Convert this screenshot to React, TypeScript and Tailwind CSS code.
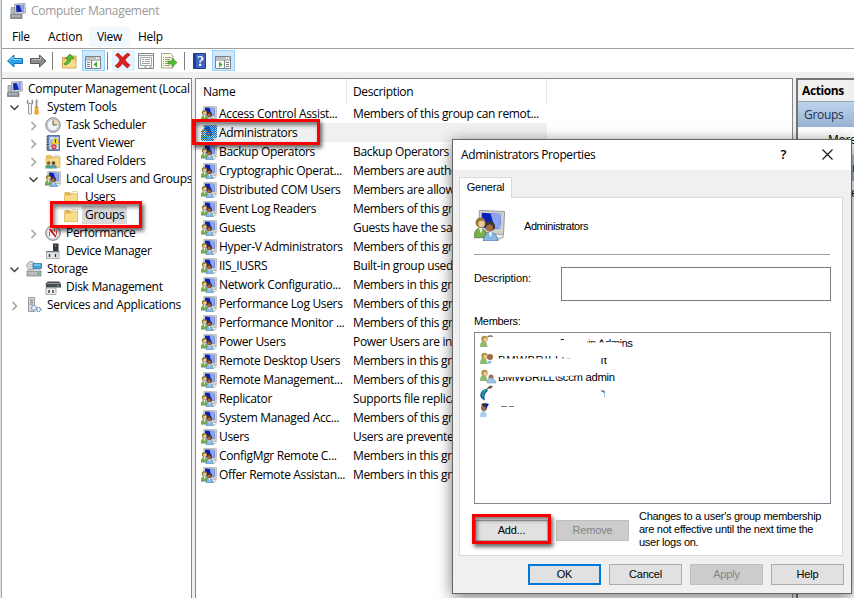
import type { ReactNode } from "react";

const groups = [
    { name: "Access Control Assist...", desc: "Members of this group can remot..." },
    { name: "Administrators", desc: "", selected: true },
    { name: "Backup Operators", desc: "Backup Operators can override se..." },
    { name: "Cryptographic Operat...", desc: "Members are authorized to perfor..." },
    { name: "Distributed COM Users", desc: "Members are allowed to launch, a..." },
    { name: "Event Log Readers", desc: "Members of this group can read e..." },
    { name: "Guests", desc: "Guests have the same access as m..." },
    { name: "Hyper-V Administrators", desc: "Members of this group have com..." },
    { name: "IIS_IUSRS", desc: "Built-in group used by Internet Inf..." },
    { name: "Network Configuratio...", desc: "Members in this group can have s..." },
    { name: "Performance Log Users", desc: "Members of this group may sche..." },
    { name: "Performance Monitor ...", desc: "Members of this group can acces..." },
    { name: "Power Users", desc: "Power Users are included for back..." },
    { name: "Remote Desktop Users", desc: "Members in this group are grante..." },
    { name: "Remote Management...", desc: "Members of this group can acces..." },
    { name: "Replicator", desc: "Supports file replication in a dom..." },
    { name: "System Managed Acc...", desc: "Members of this group are mana..." },
    { name: "Users", desc: "Users are prevented from making ..." },
    { name: "ConfigMgr Remote C...", desc: "Members in this group can view a..." },
    { name: "Offer Remote Assistan...", desc: "Members in this group can offer r..." },
];

function Svg({ size = 16, children }: { size?: number; children: ReactNode }) {
    return (
        <svg width={size} height={size} viewBox="0 0 16 16" className="shrink-0">
            {children}
        </svg>
    )
}

function ComputerIcon() {
    return (
        <Svg>
            <path d="M4.500 1 L15 .5 L15.500 10 L5 11Z" fill="#d5d7d4" stroke="#8a8f94" strokeWidth=".7" />
            <path d="M6 2.200 L13.800 1.800 L14 8.500 L6.400 9.200Z" fill="#1426b0" />
            <path d="M9.500 2 L13.800 1.800 L14 8.500 L12 8.700Z" fill="#8ea4f0" />
            <path d="M1 4.500h3.500v6H1z" fill="#b6bbc1" stroke="#7b8188" strokeWidth=".6" />
            <path d="M.5 11.500h11.500v4H.5z" fill="#8b9298" stroke="#5d646b" strokeWidth=".6" />
            <path d="M2 13h2M5 13h2M8 13h2" stroke="#e8ebee" />
        </Svg>
    )
}

// every other pixel of the icon is tinted while its row is selected
const tint = Array.from({ length: 128 }, (_, i) => {
    const y = Math.floor(i / 8)
    return { x: (i % 8) * 2 + (y % 2), y }
}).filter(({ x, y }) => (y < 13 || x < 13) && (x > 2 || y > 5))

function GroupIcon({ size = 16, selected = false }: { size?: number; selected?: boolean }) {
    return (
        <Svg size={size}>
            <path d="M2.800 .2 L15.800 .8 L15.200 13 L2.600 11Z" fill="#cfd1cd" stroke="#989a95" strokeWidth=".5" />
            <path d="M4 1.400 L14 2 L13.400 9.800 L4 9Z" fill="#0a20b8" />
            <path d="M8.500 1.700 L14 2 L13.400 9.800 L10.800 9.600Z" fill="#8ba5f2" />
            <path d="M12 14.500 L15.500 13.300 L15.500 14.300 L12.500 15.800Z" fill="#c6c6c6" />
            <path d="M0 14.300 Q0 9.600 3.300 9.200 Q6.300 9.600 6.700 14.300Z" fill="#79ad4e" stroke="#4c7c2e" strokeWidth=".4" />
            <path d="M2.500 9.300 h2 l-.8 3z" fill="#eef4dc" />
            <circle cx="3.400" cy="6.500" r="2.600" fill="#957a35" />
            <circle cx="3.900" cy="7.200" r="1.700" fill="#ecc898" />
            <path d="M4.900 16 Q4.900 12 8.500 11.500 Q12.100 12 12.300 16Z" fill="#8ab8e4" stroke="#3f71a3" strokeWidth=".4" />
            <path d="M7.500 11.500 h2 l-1 2.500z" fill="#edf3fa" />
            <circle cx="8.300" cy="8.400" r="2.600" fill="#40352e" />
            <circle cx="8" cy="9.300" r="1.800" fill="#a46a40" />
            {selected && tint.map(({ x, y }) => (
                <rect key={`${x}-${y}`} x={x} y={y} width="1" height="1" fill="#0078d7" />
            ))}
        </Svg>
    )
}

function FolderIcon() {
    return (
        <Svg>
            <path d="M1.500 3h5l1 1.500h7v10h-13z" fill="#e3b750" />
            <path d="M9 2.500h5.500v4H9z" fill="#fff" stroke="#d9ae4a" strokeWidth=".5" />
            <path d="M1.500 6h6l1.200-1.300h5.800v10h-13z" fill="#f8dd8b" stroke="#d9ac48" strokeWidth=".6" />
        </Svg>
    )
}

function ToolsIcon() {
    return (
        <Svg>
            <path d="M1.800 .8 Q0 4 2.500 6v8.500q1.500 1.500 3 0V6Q8 4 6.200 .8V4H5L4 5 3 4H1.800z" fill="#f1f3f5" stroke="#747b82" strokeWidth=".8" />
            <path d="M10.500 .5v8" stroke="#8d949b" strokeWidth="1.800" />
            <path d="M8.800 8h3.400l-.5 2 .8 4.500q-1.800 1.800-3.800 0l.6-4.500z" fill="#f5b21c" stroke="#c98410" strokeWidth=".6" />
        </Svg>
    )
}

function ClockIcon() {
    return (
        <Svg>
            <circle cx="8" cy="8" r="7.300" fill="#c9ced4" stroke="#8b8f94" />
            <circle cx="8" cy="8" r="5.600" fill="#f5f7fa" stroke="#9fa6ad" strokeWidth=".5" />
            <path d="M8 2.500 A5.500 5.500 0 0 1 13.500 8 H8Z" fill="#f3dda5" />
            <path d="M8 3.500V8h4" stroke="#4f5860" fill="none" />
        </Svg>
    )
}

function EventIcon() {
    return (
        <Svg>
            <path d="M2.500 .5h12v15h-12z" fill="#6e94cd" stroke="#3d5f95" strokeWidth=".8" />
            <path d="M4.500 2h9v12h-9z" fill="#d5e2f4" />
            <path d="M1 2h3M1 4.500h3M1 7h3M1 9.500h3M1 12h3M1 14h3" stroke="#59616b" strokeWidth=".9" />
            <path d="M5 5h3M5 7h2M5 9h3M5 11h3" stroke="#6886b0" strokeWidth=".7" />
            <path d="M10.500 2l4 7h-8z" fill="#ffd93a" stroke="#b98d08" strokeWidth=".5" />
            <path d="M10.500 4.500v3" stroke="#222" />
            <circle cx="9" cy="11.800" r="2.600" fill="#d43d2f" />
            <path d="M8 10.800l2 2m0-2l-2 2" stroke="#fff" strokeWidth=".7" />
        </Svg>
    )
}

function SharedIcon() {
    return (
        <Svg>
            <path d="M1 2h5l1 1.500h8v10H1z" fill="#e6bf66" />
            <path d="M9 1.500h5.500v3H9z" fill="#dce8f2" />
            <path d="M1 5h6l1-1h7v10.500H1z" fill="#f6d985" stroke="#d5a63d" strokeWidth=".6" />
            <path d="M.3 15.500q0-4 3.200-4t3.200 4z" fill="#51a38a" />
            <path d="M5.500 15.500q0-4 3.200-4t3.200 4z" fill="#5e9ca5" />
            <circle cx="3.700" cy="10" r="1.800" fill="#8b5b3b" />
            <circle cx="8.500" cy="10" r="1.800" fill="#554337" />
        </Svg>
    )
}

function PerformanceIcon() {
    return (
        <Svg>
            <circle cx="8" cy="8" r="7.300" fill="#e4e6e8" stroke="#747a80" />
            <circle cx="8" cy="8" r="5.700" fill="#fff" stroke="#b4b8bc" strokeWidth=".5" />
            <path d="M4.500 11V6.500M11.500 10V5.500M7 4v3M9.500 4v3" stroke="#c44a4a" strokeWidth="1.100" />
            <path d="M4.500 4l6.500 8" stroke="#d01212" strokeWidth="1.700" />
        </Svg>
    )
}

function DeviceIcon() {
    return (
        <Svg>
            <path d="M8 .5h5.500v9H8z" fill="#34383c" />
            <path d="M10.500 2v1.500" stroke="#33d641" strokeWidth="1.300" />
            <path d="M1.500 9h12.500v6.500h-12.500z" fill="#e4e6e8" stroke="#8c9196" strokeWidth=".7" />
            <path d="M1 8.500h13.500" stroke="#767b80" />
            <path d="M4.500 11v3M10.500 11v3" stroke="#33383d" strokeWidth="1.400" />
        </Svg>
    )
}

function StorageIcon() {
    return (
        <Svg>
            <path d="M1 10h14v5H1z" fill="#b9bdc2" stroke="#6a7077" strokeWidth=".7" />
            <path d="M2 8.500h12l1 1.500H1z" fill="#e7e9eb" stroke="#8b9096" strokeWidth=".4" />
            <path d="M12.500 11.500v2" stroke="#24b637" strokeWidth="1.600" />
            <circle cx="5" cy="4.700" r="4.200" fill="#d9dde1" stroke="#7c838a" strokeWidth=".7" />
            <circle cx="5" cy="4.700" r="1.200" fill="#fff" stroke="#888" strokeWidth=".5" />
            <path d="M7 2.500h8.500v5H7z" fill="#3fa3d8" stroke="#1e73a4" strokeWidth=".7" />
            <path d="M8 4h6" stroke="#a9def7" />
        </Svg>
    )
}

function DiskIcon() {
    return (
        <Svg>
            <path d="M2.500 2.500h11.500l2 2v4H.8V4.500z" fill="#464b50" />
            <path d="M2 4.500h13" stroke="#a0a5aa" strokeWidth=".9" />
            <path d="M12 6.800h2" stroke="#38d548" />
            <path d="M1 9h10v6.500H1z" fill="#eceef0" stroke="#85898e" strokeWidth=".7" />
            <path d="M4 11v3M8 11v3" stroke="#30353a" strokeWidth="1.400" />
        </Svg>
    )
}

function ServicesIcon() {
    return (
        <Svg>
            <path d="M2.500 .5h6v14h-6z" fill="#d5d9dd" stroke="#858a90" strokeWidth=".8" />
            <path d="M4 3h3M4 5h3M4 7h3" stroke="#60676e" strokeWidth=".8" />
            <circle cx="8" cy="11" r="2.600" fill="#dce8f2" stroke="#7c98b3" strokeWidth="1.300" strokeDasharray="1.200 .7" />
            <circle cx="12.700" cy="12.500" r="2.200" fill="#dce8f2" stroke="#6c96c0" strokeWidth="1.300" strokeDasharray="1.200 .7" />
        </Svg>
    )
}

const tree = [
    { label: "System Tools", level: 0, arrow: "down", icon: <ToolsIcon /> },
    { label: "Task Scheduler", level: 1, arrow: "right", icon: <ClockIcon /> },
    { label: "Event Viewer", level: 1, arrow: "right", icon: <EventIcon /> },
    { label: "Shared Folders", level: 1, arrow: "right", icon: <SharedIcon /> },
    { label: "Local Users and Groups", level: 1, arrow: "down", icon: <GroupIcon /> },
    { label: "Users", level: 2, arrow: "", icon: <FolderIcon /> },
    { label: "Groups", level: 2, arrow: "", icon: <FolderIcon />, selected: true },
    { label: "Performance", level: 1, arrow: "right", icon: <PerformanceIcon /> },
    { label: "Device Manager", level: 1, arrow: "", icon: <DeviceIcon /> },
    { label: "Storage", level: 0, arrow: "down", icon: <StorageIcon /> },
    { label: "Disk Management", level: 1, arrow: "", icon: <DiskIcon /> },
    { label: "Services and Applications", level: 0, arrow: "right", icon: <ServicesIcon /> },
]

const indents = ["pl-[5px]", "pl-[24px]", "pl-[42px]"]

function Arrow({ dir }: { dir: string }) {
    return (
        <svg width="15" height="14" viewBox="0 0 15 14" className="shrink-0" fill="none">
            {dir === "down" && <path d="M3.500 5.500l4 4 4-4" stroke="#404040" strokeWidth="1.500" />}
            {dir === "right" && <path d="M5.500 4l4 4-4 4" stroke="#a0a0a0" strokeWidth="1.500" />}
        </svg>
    )
}

function Toolbar() {
    return (
        <div className="flex h-[23px] items-center bg-white pl-1">
            <svg width="18" height="16" viewBox="0 0 18 16">
                <path d="M1.500 8l6.500-6v3.500h8.500v5H8V14z" fill="#2ca3e8" stroke="#1773b8" />
                <path d="M3 7.500l4-3.300v2.300h8.500" stroke="#8cd5fa" fill="none" />
            </svg>
            <svg width="18" height="16" viewBox="0 0 18 16" className="ml-[6px]">
                <path d="M16 8l-6.500-6v3.500H.5v5h9V14z" fill="#8c8c8c" stroke="#5c5c5c" />
                <path d="M2 6.500h8.500V4.200" stroke="#bbb" fill="none" />
            </svg>
            <div className="ml-[4px] h-[18px] w-px bg-[#808080]" />
            <svg width="16" height="16" viewBox="0 0 16 16" className="ml-[9px]">
                <path d="M.5 4.500h6l1.500-1.500h6v12H.5z" fill="#edc96b" stroke="#c29532" strokeWidth=".8" />
                <path d="M1 8h12.500v6.500H1z" fill="#f7dc8f" />
                <path d="M2 10.500q3.500-1 4-5H3.500L8 1l4 4.500H9q-.5 5-6 6.500z" fill="#55bd35" stroke="#338719" strokeWidth=".7" />
            </svg>
            <div className="ml-[4px] flex h-[21px] w-[23px] items-center justify-center border border-[#99d1ff] bg-[#cce8ff]">
                <PanelIcon />
            </div>
            <div className="ml-[2px] h-[18px] w-px bg-[#808080]" />
            <div className="ml-[4px] flex h-[21px] w-[23px] items-center justify-center bg-[#e5f3ff]">
                <svg width="17" height="17" viewBox="0 0 17 17" className="mr-[2px]">
                    <path d="M1.500 3L4 1q2.500 2 4.500 4.500Q11 2.500 14 1l2 2q-3 2-5 5 2 3 5 5l-2.500 3Q10.500 14 8.500 11.500 6.500 14.500 4 16l-3-2q3.500-2.500 5-6-1.500-3-4.500-5z" fill="#db1f1f" stroke="#ac1111" strokeWidth=".6" />
                </svg>
            </div>
            <svg width="16" height="16" viewBox="0 0 16 16" className="ml-[3px]">
                <path d="M.5.500h15v15H.5z" fill="#f7f8f9" stroke="#7d838a" />
                <path d="M1 2.500h14" stroke="#969ca2" />
                <path d="M2.500 4.500h11v8h-11z" fill="#fff" stroke="#a2a8af" />
                <path d="M4 6.500h2M7 6.500h5M4 8.500h2M7 8.500h5M4 10.500h8" stroke="#9aa1a8" />
                <path d="M6 14h3M11 14h3" stroke="#969ca2" />
            </svg>
            <svg width="17" height="16" viewBox="0 0 17 16" className="ml-[7px]">
                <path d="M.5.500h9l2.500 2.500v12H.5z" fill="#fffbe3" stroke="#a3a38e" />
                <path d="M2 4.500h1M4 4.500h6M2 6.500h1M4 6.500h5M2 8.500h1M4 8.500h3M2 10.500h1M4 10.500h4M2 12.500h1M4 12.500h5" stroke="#7d8177" strokeWidth=".8" />
                <path d="M7 8h4V5l5 4.500-5 4.500v-3H7z" fill="#58bd36" stroke="#33861a" strokeWidth=".6" />
            </svg>
            <div className="ml-[6px] h-[18px] w-px bg-[#808080]" />
            <svg width="14" height="16" viewBox="0 0 14 16" className="ml-[8px]">
                <path d="M.5.500h12v15H.5z" fill="#3c62c4" stroke="#203c8b" />
                <path d="M1 1h2v14H1z" fill="#203f99" />
                <text x="4" y="13" fill="#fff" fontSize="14" fontWeight="700" fontFamily="Liberation Serif">?</text>
            </svg>
            <div className="ml-[5px] flex h-[21px] w-[23px] items-center justify-center border border-[#99d1ff] bg-[#cce8ff]">
                <PanelIcon flip />
            </div>
        </div>
    )
}

function PanelIcon({ flip = false }: { flip?: boolean }) {
    return (
        <svg width="17" height="15" viewBox="0 0 17 15" className="mt-[3px]">
            <path d="M.5 1.500h15v12H.5z" fill="#fafafa" stroke="#7c8187" />
            <path d="M1 3h10M12 3h1M14 3h1" stroke="#7f858c" />
            <path d="M1 5h14" stroke="#7f858c" />
            {flip ? (
                <>
                    <path d="M9.500 5v9" stroke="#7f858c" />
                    <path d="M4 6.500v6l3.500-3z" fill="#3caf23" />
                    <path d="M11 7.500h3M11 9.500h3M11 11.500h3" stroke="#788088" />
                </>
            ) : (
                <>
                    <path d="M6.500 5v9" stroke="#7f858c" />
                    <path d="M12 6.500v6l-3.500-3z" fill="#3caf23" />
                    <path d="M2 7.500h3M2 9.500h3M2 11.500h3" stroke="#788088" />
                </>
            )}
        </svg>
    )
}

function Members() {
    return (
        <div className="mt-[4px] h-[172px] w-[357px] border border-[#828790] bg-white">
            <svg width="355" height="100" viewBox="475 333 355 100" fontFamily="Liberation Sans" fontSize="11.300" letterSpacing="0">
                {[341, 358, 375].map((y) => (
                    <g key={y}>
                        <path d={`M480 ${y + 6}q0-6 3.500-6t4 6z`} fill="#8dbb6f" />
                        <circle cx="484.500" cy={y - 2} r="3.200" fill="#ad9548" />
                        <circle cx="485.300" cy={y - 1.2} r="2.100" fill="#e8c794" />
                    </g>
                ))}
                <path d="M487 337q2-3 6-1l-1 1q-2-1-4 0z" fill="#555" />
                <circle cx="490" cy="357" r="3" fill="#a36c45" />
                <path d="M487 363q1-3 5-2l-2 3z" fill="#82b7e8" />
                <circle cx="491" cy="377" r="2.500" fill="#a6714b" />
                <path d="M487 383q0-5 4-5t5 5z" fill="#9bc5ed" stroke="#5d91c2" strokeWidth=".5" />
                <path d="M487 389q-5 0-6.500 4.500t4.500 7q-1-4 0-6 1-2 3-4z" fill="#1c61b7" />
                <path d="M486.500 389.500q-4.500 2-3.500 7" stroke="#1eb763" strokeWidth="1.400" fill="none" />
                <path d="M486 389l4-3.500 3 1-2 2z" fill="#6c503f" />
                <path d="M480 417q0-6 3.500-6t3 6z" fill="#a7ccec" />
                <circle cx="484" cy="408" r="3" fill="#9a6642" />
                <path d="M481 405q3-4 5 0l-1 2z" fill="#343434" />
                <path d="M485 403l4 1-3 5z" fill="#0717aa" />
                <text x="560" y="347" textLength="73">Domain Admins</text>
                <path d="M558 340.200h7v9h-7zM564 334h23v16h-23zM586 342.500h14l10-.5 12 1 1 6h-37zM585 334h18v5.500h-18z" fill="#fff" />
                <text x="498" y="364" textLength="109">BMWBRILL\scccmit</text>
                <path d="M496 358.500h66l28-1h10v9H496zM560 352h40v5h-40zM598 352h10v6h-10z" fill="#fff" />
                <text x="498" y="381" textLength="117">BMWBRILL\sccm admin</text>
                <path d="M496 371h92v4l-32 1.500-60 .5z" fill="#fff" />
                <path d="M601 391h3v2" stroke="#174684" fill="none" />
                <path d="M604.500 393v4" stroke="#84cfff" />
                <path d="M501 406.500h6M509 406.500h5" stroke="#555" strokeWidth=".8" />
            </svg>
        </div>
    )
}

const btn = "flex h-[21px] w-[73px] items-center justify-center border border-[#adadad] bg-[#e1e1e1]"
const disabledBtn = "flex h-[21px] w-[73px] items-center justify-center border border-[#bfbfbf] bg-[#cccccc] text-[#838383]"
const marker = "pointer-events-none absolute border-[3px] border-[#fb0000] shadow-[2px_3px_4px_#0009,inset_2px_3px_4px_#0008]"

function PropertiesDialog() {
    return (
        <div className="absolute left-[452px] top-[139px] flex h-[455px] w-[400px] flex-col border border-[#666] bg-[#f0f0f0] font-['Liberation_Sans'] text-[11px] tracking-[-0.2px] shadow-[0_3px_14px_#0008]">
            <div className="flex h-[30px] shrink-0 items-center bg-white pl-[8px] font-['Open_Sans'] text-[12px] tracking-[-0.4px]">
                <span>Administrators Properties</span>
                <span className="ml-auto text-[13px] font-semibold">?</span>
                <svg width="11" height="11" viewBox="0 0 11 11" className="mb-[2px] ml-[36px] mr-[18px]">
                    <path d="M.5.5l10 10m0-10l-10 10" stroke="#111" strokeWidth="1.100" />
                </svg>
            </div>
            <div className="flex flex-col px-[6px] pt-[7px]">
                <div className="relative z-10 -mb-px flex h-[21px] w-[53px] items-start justify-center border border-b-0 border-[#d9d9d9] bg-white pt-[2px] leading-[14px]">General</div>
                <div className="h-[359px] w-[384px] border border-[#d9d9d9] bg-white pl-[14px] pt-[12px]">
                    <div className="flex h-[45px] w-[356px] items-start border-b border-[#a0a0a0]">
                        <GroupIcon size={31} />
                        <span className="ml-[19px] mt-[9px] leading-[14px] tracking-[-0.45px]">Administrators</span>
                    </div>
                    <div className="mt-[12px] flex h-[34px]">
                        <span className="w-[87px] pt-[4px] leading-[14px] tracking-[-0.1px]">Description:</span>
                        <div className="h-[34px] w-[270px] border border-[#7a7a7a] bg-white" />
                    </div>
                    <div className="mt-[13px] leading-[14px] tracking-[-0.3px]">Members:</div>
                    <Members />
                    <div className="mt-[6px] flex">
                        <div className="mt-[10px] flex gap-[8px] pl-px">
                            <div className={btn}>Add...</div>
                            <div className={disabledBtn}>Remove</div>
                        </div>
                        <div className="ml-[10px] whitespace-nowrap leading-[13px] tracking-[-0.28px]">
                            Changes to a user's group membership<br />
                            are not effective until the next time the<br />
                            user logs on.
                        </div>
                    </div>
                </div>
                <div className="mt-[8px] flex gap-[8px] pl-[69px]">
                    <div className="flex h-[21px] w-[73px] items-center justify-center border-2 border-[#0078d7] bg-[#e1e1e1]">OK</div>
                    <div className={btn}>Cancel</div>
                    <div className={disabledBtn}>Apply</div>
                    <div className={btn}>Help</div>
                </div>
            </div>
            <div className={marker + " left-[19px] top-[374px] h-[30px] w-[79px]"} />
        </div>
    )
}

export default function App() {
    return (
        <div className="relative flex h-[598px] w-[854px] overflow-hidden bg-white font-['Open_Sans'] text-[12px] tracking-[-0.3px] text-black">
            <div className="w-[2px] shrink-0 border-r border-[#a8a8a8] bg-[#dfe3e8]" />
            <div className="flex min-w-0 flex-1 flex-col bg-[#f0f0f0]">
                <div className="flex h-[23px] items-center bg-white pl-[8px] pb-[2px] text-[#999]">
                    <ComputerIcon />
                    <span className="ml-[5px]">Computer Management</span>
                </div>
                <div className="flex h-[25px] items-center bg-white pl-[2px] pt-[2px]">
                    <span className="w-[34px] pl-[8px]">File</span>
                    <span className="w-[51px] pl-[10px] tracking-[-0.1px]">Action</span>
                    <span className="flex h-[20px] w-[41px] items-center justify-center bg-[#f2f8fe]">View</span>
                    <span className="pl-[8px]">Help</span>
                </div>
                <div className="h-px shrink-0 bg-[#a0a0a0]" />
                <Toolbar />
                <div className="mt-[6px] flex min-h-0 flex-1">
                    <div className="w-[190px] shrink-0 overflow-hidden whitespace-nowrap border border-b-0 border-l-0 border-[#828790] bg-white">
                        <div className="mt-px flex h-[18px] items-center pl-[5px]">
                            <ComputerIcon />
                            <span className="ml-[5px] tracking-[-0.3px]">Computer Management (Local</span>
                        </div>
                        {tree.map((item) => (
                            <div key={item.label} className={"flex h-[18px] items-center " + indents[item.level]}>
                                <Arrow dir={item.arrow} />
                                <span className="ml-[4px] flex">{item.icon}</span>
                                <span className={item.selected ? "ml-[3px] bg-[#d9d9d9] px-[3px]" : item.level === 2 ? "ml-[6px]" : "ml-[5px]"}>{item.label}</span>
                            </div>
                        ))}
                    </div>
                    <div className="ml-[3px] w-[598px] shrink-0 whitespace-nowrap border border-b-0 border-[#828790] bg-white">
                        <div className="flex h-[25px] items-center">
                            <span className="flex h-full w-[151px] items-center border-r border-[#e5e5e5] pl-[7px]">Name</span>
                            <span className="flex h-full w-[200px] items-center border-r border-[#e5e5e5] pl-[6px] tracking-[-0.35px]">Description</span>
                        </div>
                        {groups.map((g) => (
                            <div key={g.name} className={g.selected ? "flex h-[19px] w-[351px] items-center bg-[#f0f0f0] pl-[5px]" : "flex h-[19px] w-[351px] items-center pl-[5px]"}>
                                <GroupIcon selected={g.selected} />
                                <span className="ml-[2px] w-[134px] shrink-0 tracking-[-0.34px]">{g.name}</span>
                                <span className="tracking-[-0.34px]">{g.desc}</span>
                            </div>
                        ))}
                    </div>
                    <div className="ml-[3px] min-w-0 flex-1 overflow-hidden whitespace-nowrap border-l-2 border-t-2 border-[#747474] bg-white">
                        <div className="flex h-[22px] items-center border-b border-[#a0a0a0] bg-[#f0f0f0] pl-[4px] pt-px font-bold tracking-[-0.4px]">Actions</div>
                        <div className="flex h-[25px] items-center bg-linear-to-b from-[#bcd3ec] to-[#98b3d3] pl-[6px] text-[#1e3050]">Groups</div>
                        <div className="flex h-[25px] items-center pl-[30px]">More Actions</div>
                        <div className="mt-[3px] flex h-[26px] items-center bg-linear-to-b from-[#bcd3ec] to-[#98b3d3] pl-[7px] text-[#0c3c80]">Administrators</div>
                        <div className="flex h-[23px] items-center pl-[31px]">More Actions</div>
                    </div>
                </div>
            </div>
            <div className={marker + " left-[192px] top-[119px] h-[26px] w-[128px]"} />
            <div className={marker + " left-[50px] top-[201px] h-[27px] w-[92px]"} />
            <PropertiesDialog />
        </div>
    )
}
